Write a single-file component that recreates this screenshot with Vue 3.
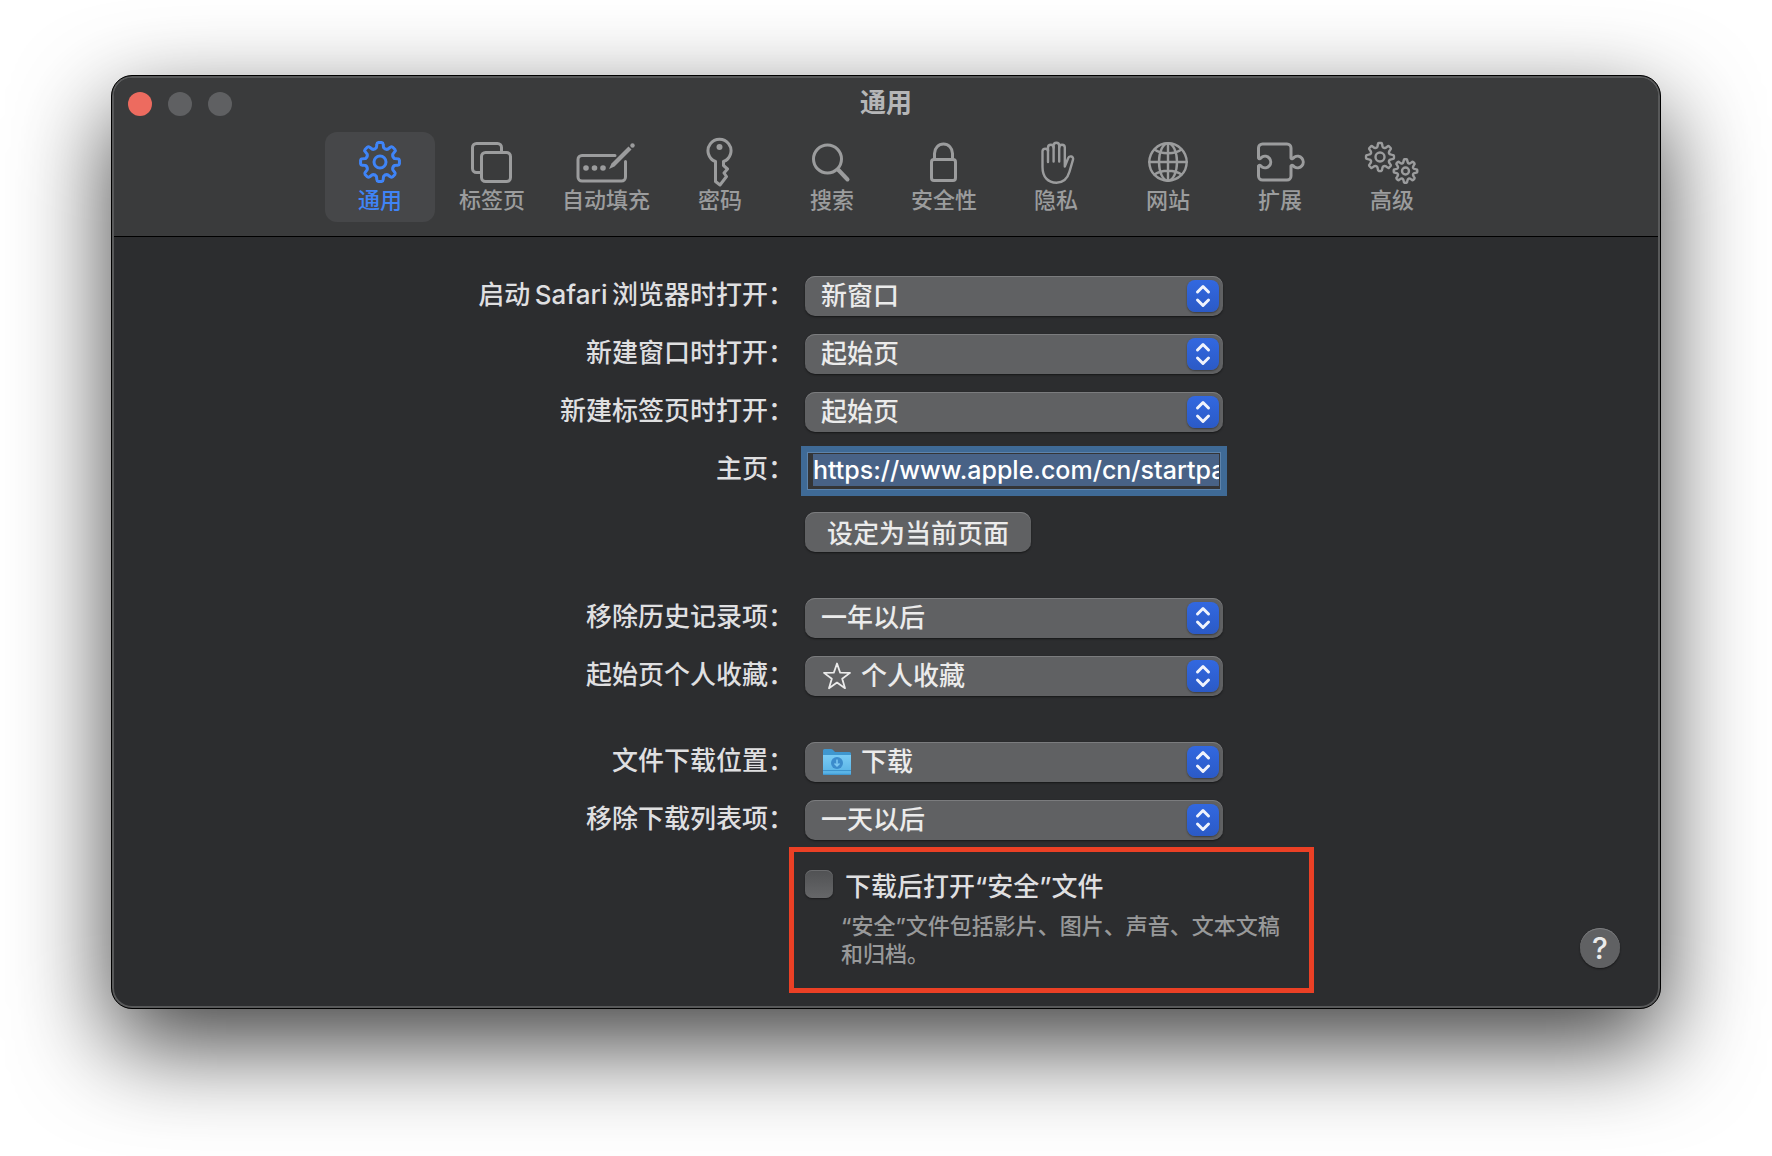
<script setup>
import { ref } from 'vue';

const activeTab = ref('general');
const homepage = ref('https://www.apple.com/cn/startpage/');
const openSafe = ref(false);

const tabs = [
    { id: 'general', name: '通用' },
    { id: 'tabs', name: '标签页' },
    { id: 'autofill', name: '自动填充' },
    { id: 'passwords', name: '密码' },
    { id: 'search', name: '搜索' },
    { id: 'security', name: '安全性' },
    { id: 'privacy', name: '隐私' },
    { id: 'websites', name: '网站' },
    { id: 'extensions', name: '扩展' },
    { id: 'advanced', name: '高级' },
]

const openItems = [
    { id: 'launch', label: '启动\u2009Safari\u2009浏览器时打开：', value: '新窗口' },
    { id: 'new-window', label: '新建窗口时打开：', value: '起始页' },
    { id: 'new-tab', label: '新建标签页时打开：', value: '起始页' },
]

const historyItems = [
    { id: 'history', label: '移除历史记录项：', value: '一年以后' },
    { id: 'favorites', label: '起始页个人收藏：', value: '个人收藏', icon: 'star' },
]

const downloadItems = [
    { id: 'location', label: '文件下载位置：', value: '下载', icon: 'folder' },
    { id: 'download-list', label: '移除下载列表项：', value: '一天以后' },
]

const groups = [openItems, historyItems, downloadItems]

// outline of a cog with eight rounded teeth
const gearPath = (cx, cy, outer, root) => {
    const point = (radius, degrees) => {
        const a = (degrees - 90) * Math.PI / 180;
        return `${(cx + radius * Math.cos(a)).toFixed(2)} ${(cy + radius * Math.sin(a)).toFixed(2)}`;
    }
    let d = '';
    for (let i = 0; i < 8; i++) {
        const c = i * 45;
        d += `${i ? 'L' : 'M'}${point(root, c - 14)}`;
        d += `L${point(outer - 1.5, c - 10)}Q${point(outer, c - 9)} ${point(outer, c - 5)}`;
        d += `L${point(outer, c + 5)}Q${point(outer, c + 9)} ${point(outer - 1.5, c + 10)}`;
        d += `L${point(root, c + 14)}Q${point(root - 1.5, c + 22.5)} ${point(root, c + 31)}`;
    }
    return d + 'Z';
}
</script>

<template>
    <main class="window">
        <header class="header">
            <div class="titlebar">
                <div class="lights">
                    <button type="button" class="light close" aria-label="关闭"></button>
                    <button type="button" class="light" aria-label="最小化"></button>
                    <button type="button" class="light" aria-label="缩放"></button>
                </div>
                <h1>通用</h1>
            </div>
            <nav class="toolbar">
                <button
                    v-for="tab in tabs"
                    :key="tab.id"
                    type="button"
                    class="tab"
                    :class="{ active: activeTab == tab.id }"
                    @click="activeTab = tab.id"
                >
                    <svg class="tab-icon" width="64" height="50" viewBox="-4 0 64 50" aria-hidden="true">
                        <g v-if="tab.id == 'general'">
                            <path :d="gearPath(28, 25, 19.5, 14.8)" />
                            <circle cx="28" cy="25" r="6" />
                        </g>
                        <g v-else-if="tab.id == 'tabs'">
                            <path d="M17 35.5h-4.5a4 4 0 0 1-4-4v-21a4 4 0 0 1 4-4h21a4 4 0 0 1 4 4v5" />
                            <rect x="17.5" y="15.5" width="29" height="29" rx="4" />
                        </g>
                        <g v-else-if="tab.id == 'autofill'">
                            <path d="M37 18.5H4a4 4 0 0 0-4 4v17.5a4 4 0 0 0 4 4h39.5a4 4 0 0 0 4-4v-15.500" />
                            <circle class="solid" cx="8" cy="31" r="2.8" />
                            <circle class="solid" cx="16.5" cy="31" r="2.8" />
                            <circle class="solid" cx="25" cy="31" r="2.8" />
                            <path class="solid" d="M31 32l2.5-5.5L50.5 9.500l3 3L36.5 29.500z" />
                            <circle class="solid" cx="54.5" cy="8.5" r="2.2" />
                        </g>
                        <g v-else-if="tab.id == 'passwords'">
                            <path d="M23.5 24.500a11.5 11.5 0 1 1 8 0v4l4 3.5-3.5 4 2.5 3.5-6.500 8.500-4.500-3.500z" />
                            <circle class="solid" cx="27.5" cy="10" r="3" />
                        </g>
                        <g v-else-if="tab.id == 'search'">
                            <circle cx="23.5" cy="22" r="14" />
                            <path class="thick" d="M34.5 33L43.5 42.500" />
                        </g>
                        <g v-else-if="tab.id == 'security'">
                            <rect x="15.5" y="22.5" width="24" height="21" rx="2.5" />
                            <path d="M18.5 22v-5.500a9 9.500 0 0 1 18 0V22" />
                        </g>
                        <g v-else-if="tab.id == 'privacy'" class="fine">
                            <path d="M14.5 30V14a2.800 2.800 0 0 1 5.500 0v-3.500a2.800 2.800 0 0 1 5.600 0V8.500a2.800 2.800 0 0 1 5.600 0v2a2.800 2.800 0 0 1 5.600 0V29.500l3.200-8c1.200-3.500 6-2.200 5 1.200l-3.500 12c-2 7-6.500 11-13 11-8.500 0-14-5.500-14-15.700z" />
                            <path d="M20 13v12M25.600 10v14.500M31.200 10v14.500" />
                        </g>
                        <g v-else-if="tab.id == 'websites'" class="fine">
                            <circle cx="28" cy="25" r="18.700" />
                            <ellipse cx="28" cy="25" rx="9" ry="18.700" />
                            <path d="M28 6.300v37.400M9.300 25h37.400M14.500 12.500c7 5 20 5 27 0M14.500 37.500c7-5 20-5 27 0" />
                        </g>
                        <g v-else-if="tab.id == 'extensions'">
                            <path d="M6.500 21V11a4 4 0 0 1 4-4h24.500a4 4 0 0 1 4 4v10c.8 1.500 2.200.5 3.500-1a5.800 5.800 0 1 1 0 10c-1.300-1.500-2.700-2.500-3.500-1V39a4 4 0 0 1-4 4H10.500a4 4 0 0 1-4-4V29c.8-1.500 2.200-.5 3.500 1a5.800 5.800 0 1 0 0-10c-1.300 1.500-2.700 2.500-3.500 1z" />
                        </g>
                        <g v-else class="fine">
                            <path :d="gearPath(16, 20, 14, 10.6)" />
                            <circle cx="16" cy="20" r="4.5" />
                            <path :d="gearPath(41.5, 34, 11.8, 9)" />
                            <circle cx="41.5" cy="34" r="3.5" />
                        </g>
                    </svg>
                    <span>{{ tab.name }}</span>
                </button>
            </nav>
        </header>

        <form class="form" @submit.prevent>
            <section v-for="(items, index) in groups" :key="index" class="group">
                <template v-for="item in items" :key="item.id">
                    <label class="label" :for="item.id">{{ item.label }}</label>
                    <div class="popup" :class="{ 'with-icon': item.icon }">
                        <select :id="item.id">
                            <option>{{ item.value }}</option>
                        </select>
                        <svg v-if="item.icon == 'star'" class="popup-icon" width="30" height="30" viewBox="0 0 30 30" aria-hidden="true">
                            <path d="M15 2.500L18.200 11.700 28 11.900 20.200 17.800 23 27.200 15 21.600 7 27.200 9.800 17.800 2 11.900 11.800 11.700z" fill="none" stroke="#ebebeb" stroke-width="1.800" stroke-linejoin="round" />
                        </svg>
                        <svg v-if="item.icon == 'folder'" class="popup-icon" width="30" height="30" viewBox="0 0 30 30" aria-hidden="true">
                            <defs>
                                <linearGradient id="folder" x1="0" y1="0" x2="0" y2="1">
                                    <stop offset="0" stop-color="#7accf5" />
                                    <stop offset="1" stop-color="#55b0e4" />
                                </linearGradient>
                            </defs>
                            <path d="M1 3.500Q1 2 2.500 2H9q1 0 1.800.8L12.500 4.500q.6.500 1.500.5h13.500Q29 5 29 6.500V12H1z" fill="#3f97cf" />
                            <path d="M1 8h28v19q0 1-1 1H2q-1 0-1-1z" fill="url(#folder)" />
                            <path d="M1 23.500h28M1 27.300h28" stroke="#3d93cb" stroke-width="1" />
                            <circle cx="15" cy="16" r="6" fill="#3c8ccc" />
                            <path d="M15 12.500v6M12.500 16.500l2.500 2.500 2.500-2.500" fill="none" stroke="#7cc8f2" stroke-width="1.500" />
                        </svg>
                        <svg class="stepper" width="32" height="32" viewBox="0 0 32 32" aria-hidden="true">
                            <path d="M10.500 12L16 6.500l5.500 5.500M10.500 20L16 25.500l5.500-5.500" />
                        </svg>
                    </div>
                </template>
                <template v-if="index == 0">
                    <label class="label" for="homepage">主页：</label>
                    <input id="homepage" v-model="homepage" class="homepage" type="text" spellcheck="false">
                    <button type="button" class="push">设定为当前页面</button>
                </template>
            </section>

            <section class="footer">
                <div class="footer-row">
                    <div class="safe-box">
                        <label class="check">
                            <input v-model="openSafe" type="checkbox">
                            <span>下载后打开“安全”文件</span>
                        </label>
                        <p>“安全”文件包括影片、图片、声音、文本文稿和归档。</p>
                    </div>
                    <button type="button" class="help">?</button>
                </div>
            </section>
        </form>
    </main>
</template>

<style>
body {
    margin: 0;
    background: #fff;
}
</style>

<style scoped>
.window {
    margin: 75px 111px 147px;
    border: 1px solid #000;
    border-radius: 21px;
    background: #2c2d2f;
    box-shadow: inset 0 0 0 2px #58595a, 0 36px 96px rgba(0, 0, 0, 0.75);
    padding: 2px;
    font-family: Inter, "Noto Sans CJK SC", sans-serif;
    font-size: 26px;
    font-weight: 500;
    color: #dfdfe0;
}
button,
input,
select {
    margin: 0;
    border: 0;
    padding: 0;
    font: inherit;
    color: inherit;
}

.header {
    background: #3a3b3c;
    border-bottom: 1px solid #000;
    border-radius: 18px 18px 0 0;
}
.titlebar {
    display: grid;
    grid-template-columns: 1fr auto 1fr;
    align-items: center;
    height: 52px;
}
.lights {
    display: flex;
    gap: 16px;
    padding-left: 14px;
}
.light {
    width: 24px;
    height: 24px;
    border-radius: 50%;
    background: #5f6062;
}
.light.close {
    background: #ed6b5f;
}
h1 {
    margin: 0;
    padding-bottom: 2px;
    font-size: 26px;
    font-weight: 700;
    line-height: 36px;
    color: #b5b6b7;
}
.toolbar {
    display: flex;
    justify-content: center;
    gap: 2px;
    padding: 2px 0 14px;
}
.tab {
    display: flex;
    flex-direction: column;
    align-items: center;
    min-width: 110px;
    height: 90px;
    padding: 5px 13px 0;
    border-radius: 12px;
    background: none;
    font-size: 22px;
    line-height: 26px;
    color: #9b9c9d;
}
.tab.active {
    background: #464749;
    color: #3f84f7;
}
.tab-icon {
    fill: none;
    stroke: currentColor;
    stroke-width: 3;
    stroke-linecap: round;
    stroke-linejoin: round;
}
.tab-icon .fine {
    stroke-width: 2.4;
}
.tab-icon .thick {
    stroke-width: 4;
}
.tab-icon .solid {
    fill: currentColor;
    stroke: none;
}

.form {
    display: flex;
    flex-direction: column;
    padding: 39px 3px 13px 0;
}
.group,
.footer {
    display: grid;
    grid-template-columns: 4fr 5fr;
    gap: 18px 11px;
}
.group {
    margin-bottom: 46px;
}
.group:nth-of-type(3) {
    margin-bottom: 7px;
}
.label {
    height: 40px;
    text-align: right;
    line-height: 38px;
}
.popup {
    position: relative;
    max-width: 418px;
    height: 40px;
}
.popup select {
    appearance: none;
    width: 100%;
    height: 40px;
    padding: 0 44px 2px 16px;
    border-radius: 10px;
    background: #606163;
    box-shadow: inset 0 1px 0 #7b7c7e, 0 1px 2px rgba(0, 0, 0, 0.5);
    color: #ebebeb;
}
.popup.with-icon select {
    padding-left: 56px;
}
.popup-icon {
    position: absolute;
    left: 17px;
    top: 5px;
    pointer-events: none;
}
.stepper {
    position: absolute;
    right: 4px;
    top: 4px;
    border-radius: 8px;
    background: linear-gradient(#3268e0, #2b5ac6);
    box-shadow: 0 1px 2px rgba(0, 0, 0, 0.4);
    fill: none;
    stroke: #f0f3fc;
    stroke-width: 3;
    stroke-linecap: round;
    stroke-linejoin: round;
    pointer-events: none;
}
.homepage {
    box-sizing: border-box;
    justify-self: start;
    align-self: end;
    width: 414px;
    max-width: 100%;
    height: 38px;
    margin-left: 2px;
    padding: 1px 1px 3px 5px;
    outline: 0;
    border: 1px solid #5d83ab;
    background: linear-gradient(#486286, #486286) content-box, #343537;
    box-shadow: 0 0 0 6px #3f6a96;
    font-size: 25px;
    color: #fff;
}
.push {
    grid-column: 2;
    justify-self: start;
    height: 40px;
    margin-top: 4px;
    padding: 0 22px 2px;
    border-radius: 10px;
    background: #606163;
    box-shadow: inset 0 1px 0 #7b7c7e, 0 1px 2px rgba(0, 0, 0, 0.5);
    color: #ebebeb;
}

.footer-row {
    grid-column: 2;
    display: flex;
    justify-content: space-between;
    align-items: flex-end;
    margin-left: -16px;
    padding-right: 35px;
}
.safe-box {
    box-sizing: border-box;
    max-width: 525px;
    padding: 18px 11px 20px;
    border: 5px solid #eb4025;
}
.check {
    display: flex;
    align-items: center;
    gap: 12px;
    height: 28px;
}
.check input {
    appearance: none;
    width: 28px;
    height: 28px;
    border-radius: 7px;
    background: linear-gradient(#505153, #666769);
    box-shadow: inset 0 1px 0 #6a6b6d, 0 1px 2px rgba(0, 0, 0, 0.4);
}
.check input:checked {
    background: #3268e0;
}
.safe-box p {
    margin: 14px 0 0;
    padding-left: 36px;
    font-size: 22px;
    line-height: 28px;
    color: #98999a;
}
.help {
    width: 40px;
    height: 40px;
    margin-bottom: 25px;
    border-radius: 50%;
    background: #606163;
    box-shadow: inset 0 1px 0 #7b7c7e, 0 1px 2px rgba(0, 0, 0, 0.5);
    font-size: 30px;
    line-height: 40px;
    color: #ebebeb;
}
</style>
